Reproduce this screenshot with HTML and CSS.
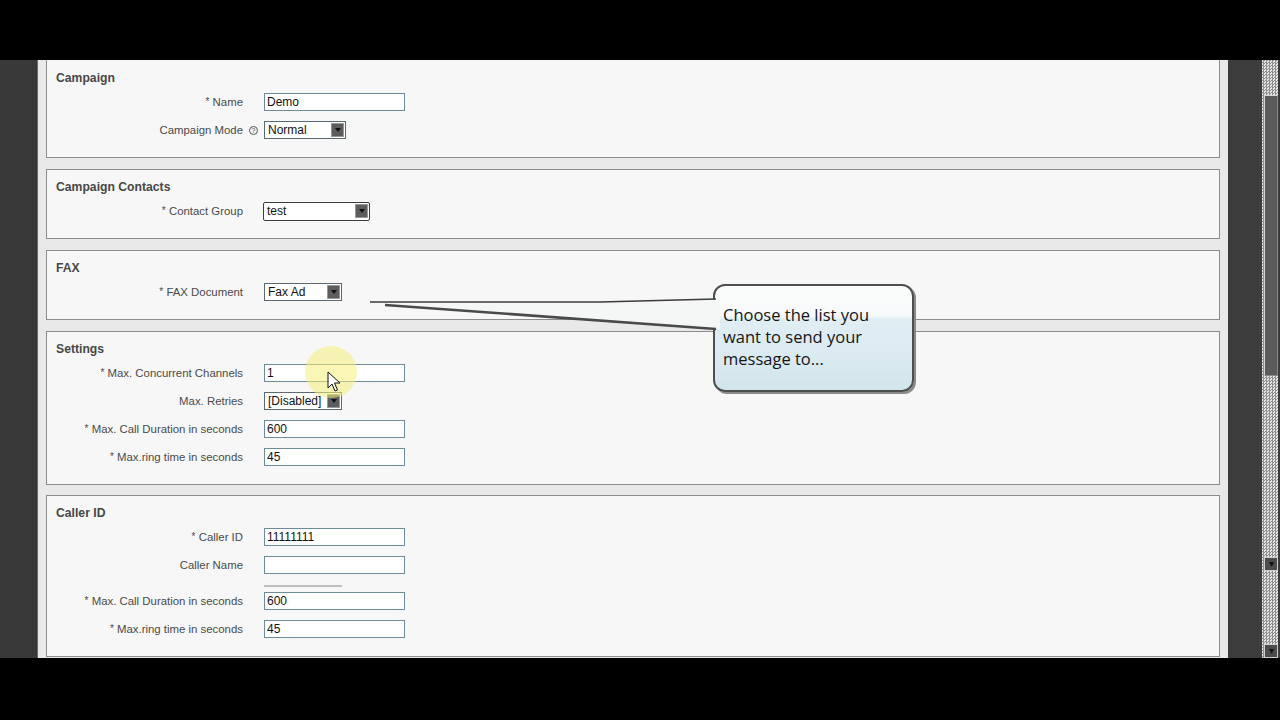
FILE: index.html
```html
<!DOCTYPE html>
<html lang="en">
  <head>
    <meta charset="utf-8">
    <title>Campaign - FAX</title>
    <link rel="stylesheet" href="styles.css">
  </head>
  <body>
    <div class="screen">
      <div class="bar-top"></div>
      <div class="desktop">
        <div class="side-left"></div>
        <div class="page">

          <section class="panel panel-cut">
            <h3 class="panel-title">Campaign</h3>
            <div class="row">
              <label class="row-label"><span class="req">*</span> Name</label>
              <div class="input">Demo</div>
            </div>
            <div class="row">
              <label class="row-label row-label-hint">Campaign Mode</label>
              <span class="hint"><span class="help">?</span></span>
              <div class="select select-mode"><span class="select-value">Normal</span><span class="select-btn"></span></div>
            </div>
          </section>

          <section class="panel">
            <h3 class="panel-title">Campaign Contacts</h3>
            <div class="row">
              <label class="row-label"><span class="req">*</span> Contact Group</label>
              <div class="select select-group"><span class="select-value">test</span><span class="select-btn"></span></div>
            </div>
          </section>

          <section class="panel">
            <h3 class="panel-title">FAX</h3>
            <div class="row">
              <label class="row-label"><span class="req">*</span> FAX Document</label>
              <div class="select select-small"><span class="select-value">Fax Ad</span><span class="select-btn"></span></div>
            </div>
          </section>

          <section class="panel">
            <h3 class="panel-title">Settings</h3>
            <div class="row">
              <label class="row-label"><span class="req">*</span> Max. Concurrent Channels</label>
              <div class="input">1</div>
            </div>
            <div class="row">
              <label class="row-label">Max. Retries</label>
              <div class="select select-small"><span class="select-value">[Disabled]</span><span class="select-btn"></span></div>
            </div>
            <div class="row">
              <label class="row-label"><span class="req">*</span> Max. Call Duration in seconds</label>
              <div class="input">600</div>
            </div>
            <div class="row">
              <label class="row-label"><span class="req">*</span> Max.ring time in seconds</label>
              <div class="input">45</div>
            </div>
          </section>

          <section class="panel">
            <h3 class="panel-title">Caller ID</h3>
            <div class="row">
              <label class="row-label"><span class="req">*</span> Caller ID</label>
              <div class="input">11111111</div>
            </div>
            <div class="row">
              <label class="row-label">Caller Name</label>
              <div class="input"></div>
            </div>
            <div class="ghost"></div>
            <div class="row">
              <label class="row-label"><span class="req">*</span> Max. Call Duration in seconds</label>
              <div class="input">600</div>
            </div>
            <div class="row">
              <label class="row-label"><span class="req">*</span> Max.ring time in seconds</label>
              <div class="input">45</div>
            </div>
          </section>

        </div>
        <div class="side-right"></div>
        <div class="scrollbar">
          <div class="scroll-thumb"></div>
          <div class="scroll-btn scroll-btn-a">&#9662;</div>
          <div class="scroll-btn scroll-btn-b">&#9662;</div>
        </div>
      </div>
      <div class="bar-bottom"></div>

      <!-- callout bubble over the form -->
      <div class="callout">
        <p>Choose the list you<br>want to send your<br>message to...</p>
      </div>
      <svg class="overlay" width="1280" height="720" viewBox="0 0 1280 720">
        <polygon points="370,302 720,299 720,329 385,305" fill="#f5f7f7"/>
        <polyline points="370,302 600,302 716,299" fill="none" stroke="#3c3c3c" stroke-width="1.3"/>
        <line x1="385" y1="305" x2="716" y2="329" stroke="#4a4a4a" stroke-width="2.6"/>
        <circle cx="331" cy="372" r="26" fill="#f6ef7a" fill-opacity="0.55"/>
        <path d="M328,372 L328,388 L332,384 L335,391 L337.5,390 L334.5,383 L340,383 Z" fill="#fff" stroke="#111" stroke-width="1"/>
      </svg>
    </div>
  </body>
</html>
```

FILE: styles.css
```css
* {
  box-sizing: border-box;
}
body {
  margin: 0;
  background: #000;
  font-family: "Liberation Sans", Arial, sans-serif;
}
.screen {
  position: relative;
  width: 1280px;
  height: 720px;
  overflow: hidden;
  display: flex;
  flex-direction: column;
}
.bar-top {
  height: 60px;
  background: #000;
}
.bar-bottom {
  height: 62px;
  background: #000;
}
.desktop {
  display: flex;
  height: 598px;
  background: #3b3b3b;
}
.side-left {
  width: 38px;
  background: #393939;
  border-right: 1px solid #6a6a6a;
}
.page {
  width: 1190px;
  height: 598px;
  overflow: hidden;
  background: #e9e9e9;
  padding: 0 8px 0 8px;
}
.side-right {
  width: 34px;
  background: #3c3c3c;
}
.scrollbar {
  width: 16px;
  background-color: #c4c4c4;
  background-image: repeating-conic-gradient(#8e8e8e 0 25%, #e6e6e6 0 50%);
  background-size: 3px 3px;
  display: flex;
  flex-direction: column;
}
.scroll-thumb {
  margin-top: 35px;
  height: 285px;
  background: #5b5b5b;
  border: 1px solid #d6d6d6;
  border-right-color: #8a8a8a;
  border-bottom-color: #8a8a8a;
  margin-left: 2px;
}
.scroll-btn {
  width: 14px;
  height: 14px;
  margin-left: 2px;
  background: #4c4c4c;
  border: 1px solid #cfcfcf;
  color: #111;
  font-size: 10px;
  line-height: 12px;
  text-align: center;
}
.scroll-btn-a {
  margin-top: 181px;
}
.scroll-btn-b {
  margin-top: 73px;
}

/* form panels */
.panel {
  background: #f7f7f7;
  border: 1px solid #8c8c8c;
  padding: 9px 0 13px 0;
  margin-bottom: 11px;
}
.panel-cut {
  border-top: none;
  padding-top: 10px;
}
.panel:nth-child(4) {
  margin-bottom: 10px;
}
.panel-title {
  margin: 0 0 2px 0;
  padding-left: 9px;
  font-size: 12.2px;
  line-height: 16px;
  font-weight: bold;
  color: #474747;
}
.row {
  display: flex;
  align-items: center;
  height: 28px;
}
.row-label {
  width: 196px;
  margin-right: 21px;
  text-align: right;
  font-size: 11.4px;
  color: #4a4a4a;
  white-space: nowrap;
}
.row-label-hint {
  margin-right: 0;
}
.req {
  font-size: 10px;
  position: relative;
  top: -1px;
}
.hint {
  width: 21px;
  padding-left: 6px;
  display: flex;
  align-items: center;
}
.help {
  display: inline-block;
  width: 9px;
  height: 9px;
  border: 1px solid #555;
  border-radius: 50%;
  font-size: 7px;
  line-height: 8px;
  text-align: center;
  color: #444;
}
.input {
  width: 141px;
  height: 18px;
  background: #fff;
  border: 1px solid #6d8c97;
  font-size: 12px;
  line-height: 16px;
  padding-left: 2px;
  color: #111;
}
.select {
  display: flex;
  align-items: center;
  height: 18px;
  background: #fff;
  border: 1px solid #5a6a70;
  font-size: 12px;
  color: #111;
  padding: 1px;
}
.select-value {
  flex: 1;
  padding-left: 2px;
  white-space: nowrap;
}
.select-btn {
  position: relative;
  width: 13px;
  height: 14px;
  background: #5d5d5d;
  border: 1px solid #999;
}
.select-btn::after {
  content: "";
  position: absolute;
  left: 3px;
  top: 4px;
  border-left: 3px solid transparent;
  border-right: 3px solid transparent;
  border-top: 4px solid #111;
}
.select-mode {
  width: 82px;
}
.select-group {
  width: 107px;
  height: 19px;
  margin-left: -1px;
  border-color: #3d3d3d;
  border-radius: 2px;
}
.select-small {
  width: 78px;
}
.ghost {
  height: 8px;
  margin-left: 217px;
  width: 78px;
  border-bottom: 2px solid #9a9a9a;
  opacity: 0.6;
}

/* callout */
.callout {
  position: absolute;
  left: 713px;
  top: 284px;
  width: 201px;
  height: 108px;
  border: 2px solid #4e4e4e;
  border-radius: 12px;
  box-shadow: 2px 2px 0 #8a8a8a;
  background: linear-gradient(#fbfcfc 0%, #f7f9fa 28%, #e0eef4 32%, #dbeaf1 70%, #d2e4ec 100%);
}
.callout p {
  margin: 0;
  padding: 18px 6px 0 8px;
  font-family: "Open Sans", "DejaVu Sans", sans-serif;
  font-size: 16.5px;
  line-height: 22px;
  color: #151515;
}
.overlay {
  position: absolute;
  left: 0;
  top: 0;
  pointer-events: none;
}
```
